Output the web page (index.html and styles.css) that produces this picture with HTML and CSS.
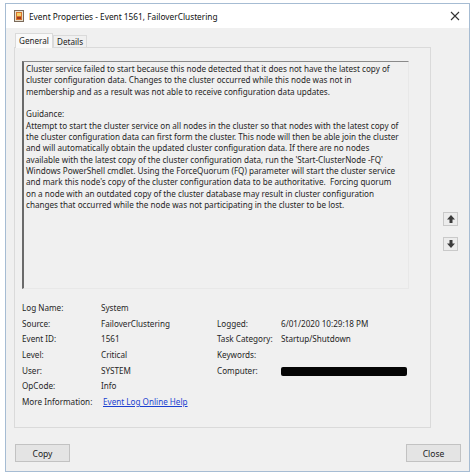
FILE: index.html
```html
<!DOCTYPE html>
<html>
<head>
<meta charset="utf-8">
<link rel="stylesheet" href="styles.css">
</head>
<body>
<div class="window">
  <div class="titlebar">
    <svg class="appicon" width="10" height="12" viewBox="0 0 10 12">
      <rect x="0.5" y="0.5" width="9" height="11" fill="#e8e0d0" stroke="#7a6a5a"/>
      <rect x="2" y="2" width="6" height="8" fill="#d9732a"/>
      <rect x="3" y="3" width="4" height="3" fill="#f3d36b"/>
      <rect x="3" y="7" width="4" height="2" fill="#a33b1f"/>
    </svg>
    <span class="title">Event Properties - Event 1561, FailoverClustering</span>
    <svg class="close" width="10" height="10" viewBox="0 0 10 10">
      <path d="M1 1 L9 9 M9 1 L1 9" stroke="#333" stroke-width="1.1"/>
    </svg>
  </div>
  <div class="client">
    <div class="tabs">
      <div class="tab active">General</div>
      <div class="tab">Details</div>
    </div>
    <div class="main">
      <div class="panel">
        <div class="desc">
          <span class="ln">Cluster service failed to start because this node detected that it does not have the latest copy of</span>
          <span class="ln">cluster configuration data. Changes to the cluster occurred while this node was not in</span>
          <span class="ln">membership and as a result was not able to receive configuration data updates.</span>
          <span class="ln">&nbsp;</span>
          <span class="ln">Guidance:</span>
          <span class="ln">Attempt to start the cluster service on all nodes in the cluster so that nodes with the latest copy of</span>
          <span class="ln">the cluster configuration data can first form the cluster. This node will then be able join the cluster</span>
          <span class="ln">and will automatically obtain the updated cluster configuration data. If there are no nodes</span>
          <span class="ln">available with the latest copy of the cluster configuration data, run the 'Start-ClusterNode -FQ'</span>
          <span class="ln">Windows PowerShell cmdlet. Using the ForceQuorum (FQ) parameter will start the cluster service</span>
          <span class="ln">and mark this node's copy of the cluster configuration data to be authoritative.&nbsp; Forcing quorum</span>
          <span class="ln">on a node with an outdated copy of the cluster database may result in cluster configuration</span>
          <span class="ln">changes that occurred while the node was not participating in the cluster to be lost.</span>
        </div>
        <div class="props">
          <span class="lbl">Log Name:</span><span class="val">System</span><span></span><span></span>
          <span class="lbl">Source:</span><span class="val">FailoverClustering</span><span class="lbl">Logged:</span><span class="val">6/01/2020 10:29:18 PM</span>
          <span class="lbl">Event ID:</span><span class="val">1561</span><span class="lbl">Task Category:</span><span class="val">Startup/Shutdown</span>
          <span class="lbl">Level:</span><span class="val">Critical</span><span class="lbl">Keywords:</span><span class="val"></span>
          <span class="lbl">User:</span><span class="val">SYSTEM</span><span class="lbl">Computer:</span><span class="val"><span class="redact"></span></span>
          <span class="lbl">OpCode:</span><span class="val">Info</span><span></span><span></span>
          <span class="lbl">More Information:</span><span class="val link">Event Log Online Help</span><span></span><span></span>
        </div>
      </div>
      <div class="arrows">
        <div class="abtn">
          <svg width="10" height="10" viewBox="0 0 10 10"><path d="M5 1 L9 5.5 L6.5 5.5 L6.5 9 L3.5 9 L3.5 5.5 L1 5.5 Z" fill="#3c3c3c"/></svg>
        </div>
        <div class="abtn">
          <svg width="10" height="10" viewBox="0 0 10 10"><path d="M5 9 L9 4.5 L6.5 4.5 L6.5 1 L3.5 1 L3.5 4.5 L1 4.5 Z" fill="#3c3c3c"/></svg>
        </div>
      </div>
    </div>
    <div class="buttons">
      <div class="btn">Copy</div>
      <div class="btn">Close</div>
    </div>
  </div>
</div>
</body>
</html>
```

FILE: styles.css
```css
html, body {
  margin: 0;
  padding: 0;
  background: #ffffff;
}
body {
  font-family: "Noto Sans", "Open Sans", sans-serif;
  font-size: 8.15px;
  color: #262626;
}
.window {
  box-sizing: border-box;
  margin: 3px 0 0 5px;
  width: 465px;
  height: 469px;
  border: 1px solid #a6bcd3;
  display: flex;
  flex-direction: column;
  background: #f0f0f0;
}
.titlebar {
  height: 24px;
  background: #ffffff;
  display: flex;
  align-items: center;
  padding-left: 8px;
  flex: none;
}
.appicon { margin-right: 5px; }
.title {
  font-size: 8.3px;
  color: #111;
  flex: 1;
}
.close { margin-right: 9px; }
.client {
  flex: 1;
  display: flex;
  flex-direction: column;
  padding: 5px 0 0 8px;
}
.tabs {
  display: flex;
  align-items: flex-end;
  height: 14px;
  padding-left: 1px;
}
.tab {
  box-sizing: border-box;
  height: 12px;
  padding: 0 3px;
  border: 1px solid #dadada;
  border-bottom: none;
  line-height: 11px;
  font-size: 8.15px;
  color: #222;
}
.tab.active {
  height: 15px;
  background: #f9f9f9;
  padding: 0 3px;
  margin-bottom: -1px;
  position: relative;
  z-index: 1;
  line-height: 13px;
}
.main {
  display: flex;
  align-items: flex-start;
}
.panel {
  box-sizing: border-box;
  width: 417px;
  height: 381px;
  border: 1px solid #dadada;
  padding: 13px 0 0 7px;
  display: flex;
  flex-direction: column;
}
.desc {
  box-sizing: border-box;
  width: 387px;
  height: 228px;
  border-top: 1px solid #8a8a8a;
  border-left: 2px solid #6a6a6a;
  border-right: 1px solid #e8e8e8;
  border-bottom: 1px solid #e8e8e8;
  padding: 1px 0 0 2px;
  display: flex;
  flex-direction: column;
  line-height: 11.35px;
  overflow: hidden;
}
.ln { white-space: nowrap; }
.props {
  display: grid;
  grid-template-columns: 79px 116px 64px 1fr;
  grid-auto-rows: 15.6px;
  align-items: center;
  margin-top: 11px;
}
.lbl, .val { white-space: nowrap; }
.link {
  color: #1a3fd0;
  text-decoration: underline;
  padding-left: 2px;
}
.redact {
  display: inline-block;
  width: 126px;
  height: 9px;
  background: #050505;
  border-radius: 2px;
  vertical-align: middle;
}
.arrows {
  display: flex;
  flex-direction: column;
  gap: 11px;
  margin: 165px 0 0 12px;
}
.abtn {
  box-sizing: border-box;
  width: 15px;
  height: 14px;
  border: 1px solid #c9c9c9;
  background: #ececec;
  display: flex;
  align-items: center;
  justify-content: center;
}
.buttons {
  display: flex;
  justify-content: space-between;
  padding: 16px 8px 0 1px;
}
.btn {
  box-sizing: border-box;
  width: 55px;
  height: 18px;
  border: 1px solid #c2c2c2;
  background: #e4e4e4;
  display: flex;
  align-items: center;
  justify-content: center;
  font-size: 8.5px;
  color: #222;
}
```
